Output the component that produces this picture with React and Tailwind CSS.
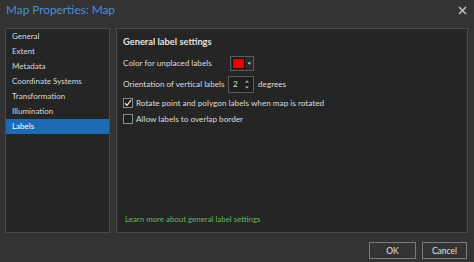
import React from "react";

const items = ["General", "Extent", "Metadata", "Coordinate Systems", "Transformation", "Illumination", "Labels"];

function Check({ checked }) {
  return (
    <div className="w-[10px] h-[10px] border border-[#8a8a8a] bg-[#1e1e1e] flex items-center justify-center shrink-0">
      {checked && (
        <svg width="8" height="8" viewBox="0 0 8 8">
          <path d="M1 4.2 L3 6.3 L7 1.2" fill="none" stroke="#e6e6e6" strokeWidth="1.3" />
        </svg>
      )}
    </div>
  );
}

export default function App() {
  return (
    <div
      className="w-[474px] h-[262px] bg-[#333333] flex flex-col text-[#dcdcdc] overflow-hidden"
      style={{ fontFamily: 'Lato, "Noto Sans", sans-serif' }}
    >
      <div className="h-[28px] flex items-start justify-between pl-[6px] pr-[6px]">
        <div className="text-[11.8px] leading-[20px] text-[#4a90d6] mt-[0px]">Map Properties: Map</div>
        <svg width="9" height="9" viewBox="0 0 9 9" className="mt-[6px] mr-[1px]">
          <path d="M1 1 L8 8 M8 1 L1 8" stroke="#bdbdbd" strokeWidth="1.6" />
        </svg>
      </div>
      <div className="flex h-[205px] pl-[5px] pr-[6px] gap-[6px]">
        <div className="w-[105px] h-full bg-[#252525] border border-[#4a4a4a] flex flex-col">
          {items.map((it) => (
            <div
              key={it}
              className={
                "h-[15px] leading-[15px] pl-[6px] text-[8px] whitespace-nowrap " +
                (it === "Labels" ? "bg-[#1d6bb3] text-white" : "text-[#d8d8d8]")
              }
            >
              {it}
            </div>
          ))}
        </div>
        <div className="flex-1 h-full bg-[#252525] border border-[#4a4a4a] flex flex-col pl-[6px] text-[8.2px]">
          <div className="text-[9.3px] font-bold text-[#e2e2e2] mt-[5px] leading-[16px]">General label settings</div>
          <div className="flex items-center h-[16px] mt-[5px]">
            <div className="w-[107px] whitespace-nowrap">Color for unplaced labels</div>
            <div className="w-[24px] h-[15px] border border-[#5a5a5a] bg-[#2a2a2a] flex items-center pl-[1px]">
              <div className="w-[14px] h-[11px] bg-[#ee0000] border border-[#111]"></div>
              <svg width="7" height="5" viewBox="0 0 7 5" className="ml-[1px]">
                <path d="M1.5 1.5 L3.5 3.5 L5.5 1.5 Z" fill="#cfcfcf" />
              </svg>
            </div>
          </div>
          <div className="flex items-center h-[17px] mt-[5px]">
            <div className="w-[105px] whitespace-nowrap">Orientation of vertical labels</div>
            <div className="w-[26px] h-[17px] border border-[#5a5a5a] bg-[#1e1e1e] flex items-center justify-between pl-[4px] pr-[3px]">
              <span>2</span>
              <svg width="6" height="11" viewBox="0 0 6 11">
                <path d="M1 3.5 L3 1.5 L5 3.5 Z" fill="#bdbdbd" />
                <path d="M1 7.5 L3 9.5 L5 7.5 Z" fill="#bdbdbd" />
              </svg>
            </div>
            <div className="ml-[4px]">degrees</div>
          </div>
          <div className="flex items-center h-[14px] mt-[3px] gap-[3px]">
            <Check checked />
            <span className="whitespace-nowrap">Rotate point and polygon labels when map is rotated</span>
          </div>
          <div className="flex items-center h-[14px] mt-[2px] gap-[3px]">
            <Check />
            <span className="whitespace-nowrap">Allow labels to overlap border</span>
          </div>
          <div className="flex-1"></div>
          <div className="text-[7.9px] text-[#63b463] mb-[6px] ml-[2px] leading-[14px]">Learn more about general label settings</div>
        </div>
      </div>
      <div className="flex justify-end gap-[6px] pr-[7px] mt-[9px]">
        <button className="w-[47px] h-[17px] border border-[#7a7a7a] bg-[#333333] text-[8.5px] leading-[14px] text-[#e0e0e0]">OK</button>
        <button className="w-[45px] h-[17px] border border-[#7a7a7a] bg-[#333333] text-[8.5px] leading-[14px] text-[#e0e0e0]">Cancel</button>
      </div>
    </div>
  );
}
